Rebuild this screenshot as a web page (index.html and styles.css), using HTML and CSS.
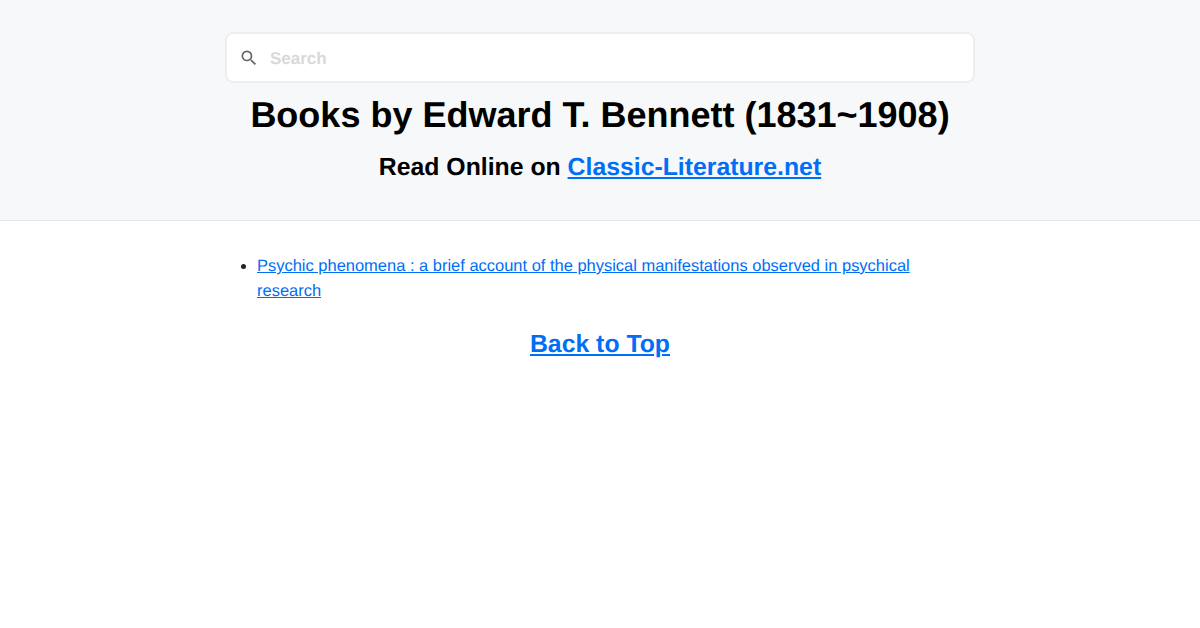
FILE: index.html
```html
<!DOCTYPE html>
<html lang="en">
<head>
    <meta charset="UTF-8">
    <meta name="viewport" content="width=device-width, initial-scale=1.0">
    <title>Books by Edward T. Bennett (1831~1908)</title>
    <link rel="stylesheet" href="styles.css">
</head>
<body>
    <div class="header">
        <div class="container">
            <div class="search">
                <svg class="search-icon" viewBox="0 0 24 24" width="20" height="20">
                    <path fill="#666" d="M15.5 14h-.79l-.28-.27A6.47 6.47 0 0 0 16 9.5 6.5 6.5 0 1 0 9.5 16c1.61 0 3.09-.59 4.23-1.57l.27.28v.79l5 4.99L20.49 19l-4.99-5zm-6 0C7.01 14 5 11.99 5 9.5S7.01 5 9.5 5 14 7.01 14 9.5 11.99 14 9.5 14z"/>
                </svg>
                <input class="search-input" type="text" placeholder="Search">
            </div>
            <h1 class="title">Books by Edward T. Bennett (1831~1908)</h1>
            <h2 class="subtitle">Read Online on <a href="#">Classic-Literature.net</a></h2>
        </div>
    </div>

    <div class="container content">
        <ul class="book-list">
            <li><a href="#">Psychic phenomena : a brief account of the physical manifestations observed in psychical research</a></li>
        </ul>
        <h2 class="back-top"><a href="#">Back to Top</a></h2>
    </div>
</body>
</html>
```

FILE: styles.css
```css
* {
    box-sizing: border-box;
    margin: 0;
    padding: 0;
    font-family: "Liberation Sans", Arial, sans-serif;
    text-rendering: geometricPrecision;
}

body {
    background: white;
    color: #000;
}

a {
    color: #006ef5;
}

.container {
    width: 750px;
    margin: 0 auto;
}

.header {
    height: 221px;
    padding-top: 32px;
    background: #f7f8fa;
    border-bottom: 1px solid #e4e6e8;
}

.search {
    display: flex;
    align-items: center;
    height: 51px;
    padding-left: 12px;
    background: white;
    border: 2px solid #eceef0;
    border-radius: 8px;
}

.search-icon {
    flex-shrink: 0;
}

.search-input {
    flex: 1;
    margin-left: 11px;
    padding-top: 2px;
    border: none;
    outline: none;
    background: transparent;
    font-size: 17px;
    font-weight: 600;
}

.search-input::placeholder {
    color: #d9d9d9;
    opacity: 1;
}

.title {
    margin-top: 9px;
    font-size: 36px;
    line-height: 46px;
    text-align: center;
}

.subtitle {
    margin-top: 14px;
    font-size: 24.8px;
    line-height: 32px;
    text-align: center;
}

.content {
    padding-top: 33px;
}

.book-list {
    padding-left: 32px;
    color: #212529;
    font-size: 16.48px;
    line-height: 25px;
}

.back-top {
    margin-top: 25px;
    font-size: 24.8px;
    line-height: 32px;
    text-align: center;
}
```
